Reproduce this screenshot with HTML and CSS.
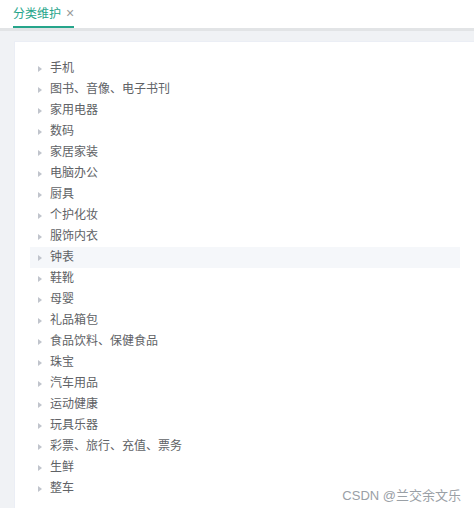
FILE: index.html
```html
<!DOCTYPE html>
<html>
<head>
<meta charset="utf-8">
<link rel="stylesheet" href="styles.css">
</head>
<body>
<div class="tabs">
  <div class="tab active">分类维护<span class="close">×</span></div>
</div>
<div class="main">
  <div class="card">
    <ul class="tree">
      <li class="node"><span class="arrow"></span>手机</li>
      <li class="node"><span class="arrow"></span>图书、音像、电子书刊</li>
      <li class="node"><span class="arrow"></span>家用电器</li>
      <li class="node"><span class="arrow"></span>数码</li>
      <li class="node"><span class="arrow"></span>家居家装</li>
      <li class="node"><span class="arrow"></span>电脑办公</li>
      <li class="node"><span class="arrow"></span>厨具</li>
      <li class="node"><span class="arrow"></span>个护化妆</li>
      <li class="node"><span class="arrow"></span>服饰内衣</li>
      <li class="node hover"><span class="arrow"></span>钟表</li>
      <li class="node"><span class="arrow"></span>鞋靴</li>
      <li class="node"><span class="arrow"></span>母婴</li>
      <li class="node"><span class="arrow"></span>礼品箱包</li>
      <li class="node"><span class="arrow"></span>食品饮料、保健食品</li>
      <li class="node"><span class="arrow"></span>珠宝</li>
      <li class="node"><span class="arrow"></span>汽车用品</li>
      <li class="node"><span class="arrow"></span>运动健康</li>
      <li class="node"><span class="arrow"></span>玩具乐器</li>
      <li class="node"><span class="arrow"></span>彩票、旅行、充值、票务</li>
      <li class="node"><span class="arrow"></span>生鲜</li>
      <li class="node"><span class="arrow"></span>整车</li>
    </ul>
  </div>
  <div class="watermark">CSDN @兰交余文乐</div>
</div>
</body>
</html>
```
FILE: styles.css
```css
html, body {
  margin: 0;
  padding: 0;
  height: 100%;
  overflow: hidden;
  font-family: "Liberation Sans", "Noto Sans CJK SC", sans-serif;
}
body {
  background: #f0f2f5;
}
.tabs {
  height: 28px;
  background: #fff;
  border-bottom: 3px solid #e2e4e6;
  display: flex;
  padding-left: 13px;
}
.tab {
  height: 28px;
  box-sizing: border-box;
  font-size: 12px;
  line-height: 26px;
  color: #26a58b;
  border-bottom: 2px solid #26a58b;
  width: 61px;
  white-space: nowrap;
}
.close {
  color: #999;
  margin-left: 5px;
  font-size: 14px;
}
.main {
  position: relative;
  padding: 10px 0 0 14px;
  height: 477px;
  box-sizing: border-box;
}
.card {
  background: #fff;
  border-top: 1px solid #ebeef5;
  border-left: 1px solid #ebeef5;
  height: 467px;
  padding: 16px 14px 0 15px;
  box-sizing: border-box;
}
.tree {
  list-style: none;
  margin: 0;
  padding: 0;
}
.node {
  height: 21px;
  line-height: 21px;
  font-size: 12px;
  color: #606266;
  display: flex;
  align-items: center;
}
.node.hover {
  background: #f5f7fa;
}
.arrow {
  width: 0;
  height: 0;
  border-top: 3.5px solid transparent;
  border-bottom: 3.5px solid transparent;
  border-left: 4px solid #c0c4cc;
  margin-left: 8px;
  margin-right: 8px;
}
.watermark {
  position: absolute;
  right: 13px;
  top: 454px;
  font-size: 13px;
  color: #9aa0a6;
}
```
